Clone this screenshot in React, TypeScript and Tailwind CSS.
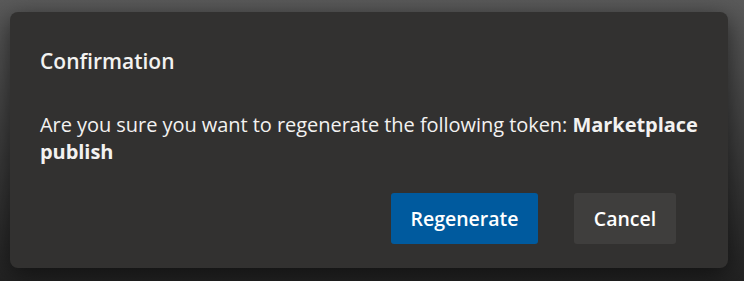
import React from "react";

export default function App() {
  return (
    <div
      className="w-[744px] h-[281px] overflow-hidden bg-gradient-to-b from-[#5a5a5a] to-[#222222] pl-[10px] pt-[12px]"
      style={{ fontFamily: '"Open Sans", "Noto Sans", sans-serif' }}
    >
      <div className="w-[718px] h-[256px] rounded-[8px] bg-[#323130] shadow-[0_6px_24px_rgba(0,0,0,0.55)] px-[30px] pt-[35px] flex flex-col">
        <h1 className="text-[21px] leading-[28px] font-semibold text-[#f3f2f1]">Confirmation</h1>
        <p className="mt-[36px] mr-[-12px] text-[20px] tracking-[-0.05px] leading-[27px] text-[#f3f2f1]">
          Are you sure you want to regenerate the following token: <b className="font-bold">Marketplace</b>{" "}
          <b className="font-bold">publish</b>
        </p>
        <div className="mt-[28px] flex justify-end gap-[36px] pr-[22px]">
          <button className="w-[147px] h-[51px] rounded-[3px] bg-[#005a9e] text-[19.5px] font-semibold text-white">Regenerate</button>
          <button className="w-[102px] h-[51px] rounded-[3px] bg-[#3f3e3d] text-[19.5px] font-semibold text-white">Cancel</button>
        </div>
      </div>
    </div>
  );
}
